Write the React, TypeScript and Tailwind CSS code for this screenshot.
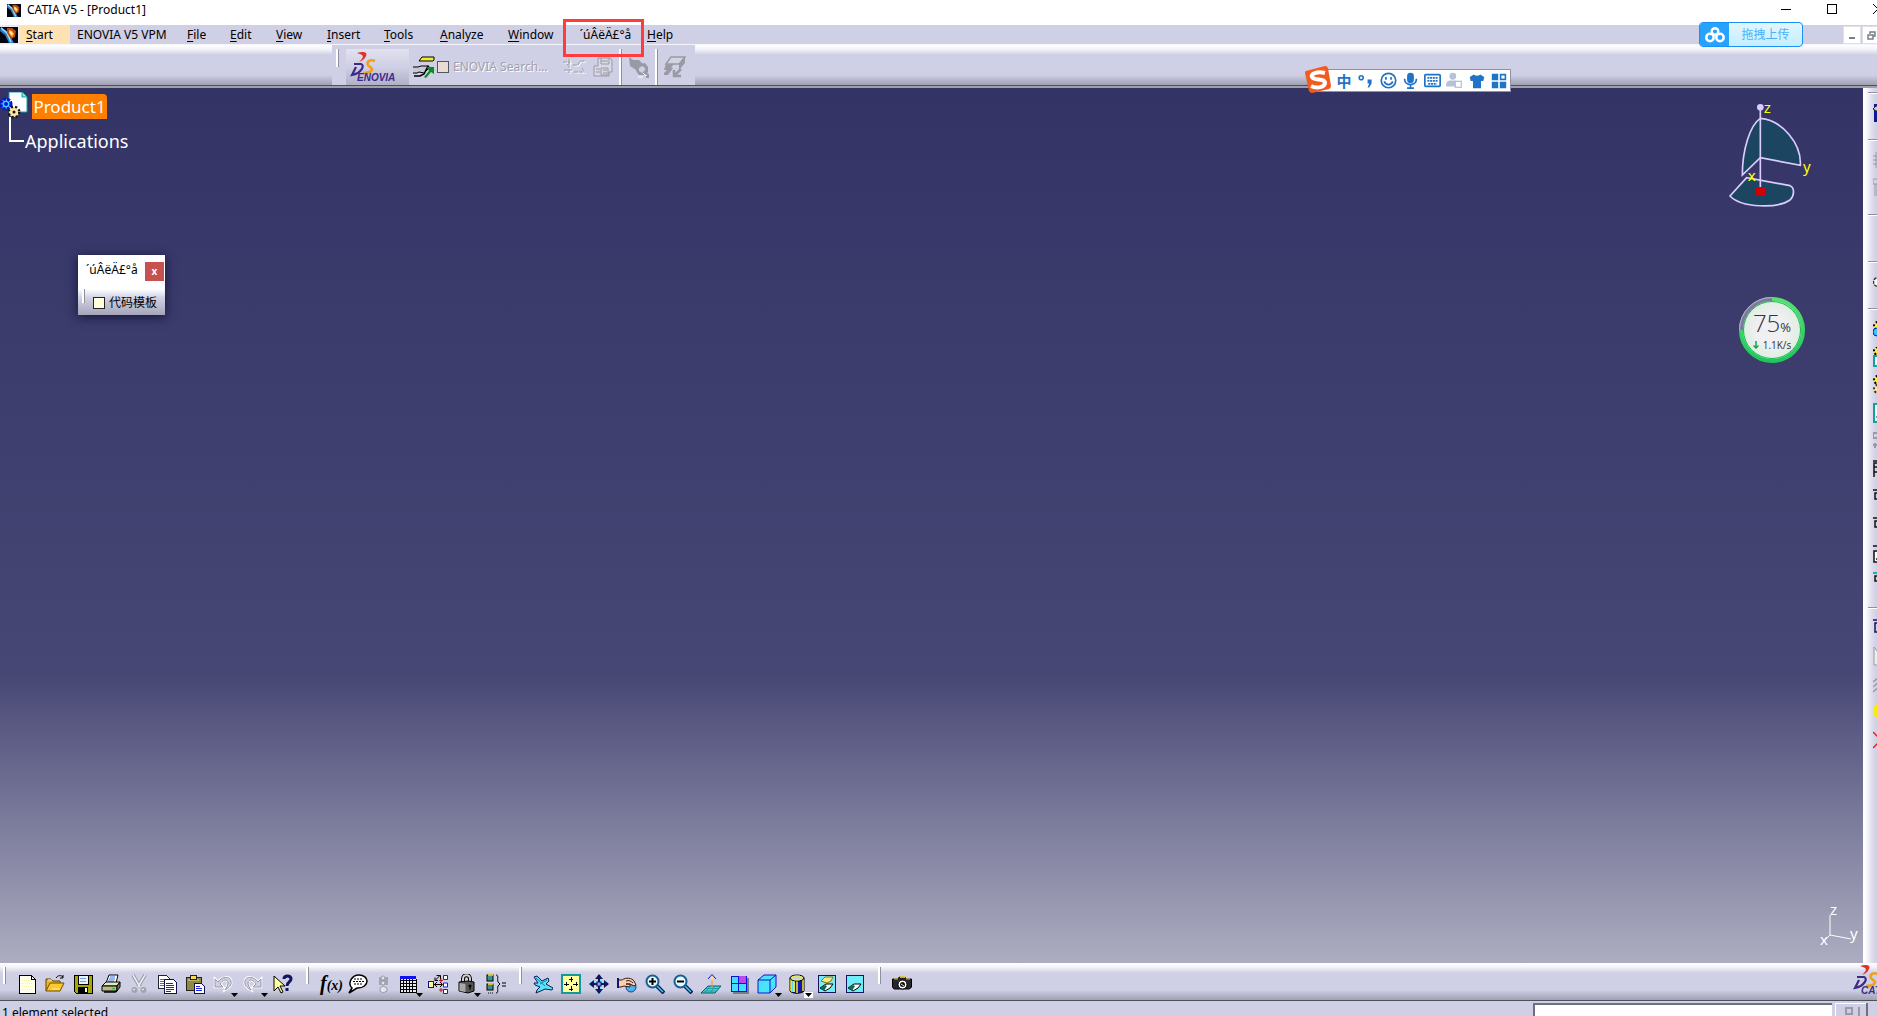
import React from 'react';

const toolbarBg =
  'bg-[linear-gradient(to_bottom,#ffffff_0px,#f4f4fa_4px,#cfcfe5_10px,#cfcfe5_calc(100%-10px),#a0a0b4_100%)]';

const Svg = ({ children, size = 20 }: { children: React.ReactNode; size?: number }) => (
  <svg width={size} height={size} viewBox="0 0 20 20" fill="none" className="shrink-0" aria-hidden="true">
    {children}
  </svg>
);

const Grip = ({ className = '' }: { className?: string }) => (
  <div className={`w-[3px] shrink-0 border-l-2 border-r border-l-white border-r-[#8f8fa0] ${className}`} />
);

const Mark = () => (
  <>
    <path d="M7 2 C13 0 18 1 16 5 C15 8 12 10 9 11 C12 8 14 6 12 4 C11 3 9 3 7 2Z" fill="#e2302c" />
    <path d="M4 13 H11 C15 14 12 22 2 24 L6 16" stroke="#3d2a86" strokeWidth="2.2" />
    <path d="M25 10 C20 8 16 11 18 14 C20 17 24 17 21 20 C19 22 16 22 13 22" stroke="#f0a01e" strokeWidth="2.6" />
  </>
);

const CatiaIcon = ({ w, h }: { w: number; h: number }) => (
  <svg width={w} height={h} viewBox="0 0 18 16" preserveAspectRatio="none" className="shrink-0" aria-hidden="true">
    <rect width="18" height="16" fill="#050510" />
    <path d="M1 0L8 5l6 11H9L5 8 0 4z" fill="#2f7fc8" />
    <path d="M1 1l6 5 4 9" stroke="#a6dcf5" strokeWidth="1.5" fill="none" />
    <path d="M7 1h5l4 3-1 6-4 2-4-6z" fill="#b84a10" />
    <path d="M9 3l3 1 2 3-2 3-3-4z" fill="#ffc24a" />
    <path d="M10 5l2 2" stroke="#fff3c8" strokeWidth="1.500" />
  </svg>
);

const gray = '#9a9aa6';

const icons: Record<string, React.ReactNode> = {
  new: (
    <g shapeRendering="crispEdges">
      <path d="M2 1h12l4 4v14H2z" fill="#fffff0" stroke="#000" />
      <path d="M14 1v4h4" stroke="#000" />
      <path d="M4 9h11M5 12h11M4 15h11M5 6h7" stroke="#f7f3a0" strokeDasharray="1 1" />
    </g>
  ),
  open: (
    <>
      <path d="M1 17V5h5l2 2h7v3" fill="#e8b820" stroke="#5a4300" />
      <path d="M1 17L5 9h14l-4 8z" fill="#ffc72e" stroke="#6b4d00" />
      <path d="M3 6h4M7 15h8" stroke="#fff3a8" />
      <path d="M11 4c2-3 5-3 7-1m0-2v3h-3" stroke="#000" />
    </>
  ),
  save: (
    <g shapeRendering="crispEdges">
      <path d="M1 1h18v18H3l-2-2z" fill="#a8a800" stroke="#000" />
      <rect x="5" y="1" width="10" height="9" fill="#e8f2ff" stroke="#000" />
      <path d="M7 4h6M7 7h6" stroke="#6f9fe0" />
      <rect x="5" y="13" width="10" height="6" fill="#000" />
      <rect x="12" y="14" width="2" height="4" fill="#fff" />
    </g>
  ),
  print: (
    <>
      <path d="M5 9L8 1h9l-2 8z" fill="#fff" stroke="#000" />
      <path d="M9 3h5M8 5h6M7 7h6" stroke="#3b6fe0" />
      <path d="M1 12l4-4h14l-3 4z" fill="#e6e6c8" stroke="#000" />
      <path d="M1 12h15v5H1z" fill="#b9b98a" stroke="#000" />
      <path d="M16 12l3-4v5l-3 4z" fill="#7d7d55" stroke="#000" />
      <path d="M3 18h11l2-1" stroke="#000" strokeWidth="1.5" />
      <path d="M11 14.500h3" stroke="#39c13d" strokeWidth="1.5" />
    </>
  ),
  cut: (
    <>
      <path d="M4 1l7 12M16 1L9 13" stroke={gray} strokeWidth="3.500" />
      <path d="M4 1l7 12M16 1L9 13" stroke="#ececf6" strokeWidth="1.500" />
      <circle cx="5.500" cy="16" r="3" fill="#a4a4ae" />
      <circle cx="14.500" cy="16" r="3" fill="#a4a4ae" />
      <path d="M4 16l2-1M13 16l2-1" stroke="#fff" />
    </>
  ),
  copy: (
    <g shapeRendering="crispEdges">
      <path d="M1 1h8l3 3v10H1z" fill="#fff" stroke="#223" />
      <path d="M3 5h4M3 7h4M3 9h4M3 11h4" stroke="#2d7be0" />
      <path d="M7 5h9l3 3v11H7z" fill="#fff" stroke="#101050" />
      <path d="M9 9h7M9 11h8M9 13h8M9 15h8M9 17h5" stroke="#1a22e0" />
    </g>
  ),
  paste: (
    <g shapeRendering="crispEdges">
      <path d="M1 3h15v13H1z" fill="#8f8a45" stroke="#222" />
      <path d="M3 5h11v2H3z" fill="#b8b46a" />
      <path d="M5 1h6v4H5z" fill="#ffd84a" stroke="#222" />
      <path d="M9 9h7l3 3v7H9z" fill="#fff" stroke="#101050" />
      <path d="M11 12h4M11 14h6M11 16h6" stroke="#1a22e0" />
    </g>
  ),
  undo: (
    <>
      <path d="M2 5v8h8l-3-3c3-5 8-5 8-1 0 3-2 5-3 7 4-2 7-5 6-9C17 2 9 2 5 8z" stroke="#fff" strokeWidth="2.5" />
      <path d="M2 5v8h8l-3-3c3-5 8-5 8-1 0 3-2 5-3 7 4-2 7-5 6-9C17 2 9 2 5 8z" stroke={gray} fill="#cfcfe5" />
    </>
  ),
  redo: (
    <>
      <path d="M18 5v8h-8l3-3C10 5 5 5 5 9c0 3 2 5 3 7-4-2-7-5-6-9C3 2 11 2 15 8z" stroke="#fff" strokeWidth="2.5" />
      <path d="M18 5v8h-8l3-3C10 5 5 5 5 9c0 3 2 5 3 7-4-2-7-5-6-9C3 2 11 2 15 8z" stroke={gray} fill="#cfcfe5" />
    </>
  ),
  help: (
    <>
      <path d="M1 2v15l4-4 3 6 2-1-3-6h5z" fill="#ffff9a" stroke="#000" />
      <path d="M11 5c0-4 7-4 7 0 0 3-4 3-4 7" stroke="#15155e" strokeWidth="3" />
      <rect x="12.500" y="14" width="3" height="3" fill="#15155e" />
    </>
  ),
  bubble: (
    <>
      <path d="M11 1c5 0 8 3 8 6 0 4-4 7-9 7H9l-8 5 3-5C-1 9 4 1 11 1z" fill="#fff" stroke="#000" strokeWidth="1.5" />
      <path d="M6 5h9M5 7.500h11M6 10h8" stroke="#000" strokeDasharray="2 1" />
    </>
  ),
  traffic: (
    <>
      <path d="M7 3h9v8H7z" fill="#a4a4ae" />
      <circle cx="11" cy="4" r="2" fill="#e4e4ee" stroke={gray} />
      <circle cx="11" cy="9" r="2" fill="#e4e4ee" stroke={gray} />
      <path d="M8 14l3-2 4 2v3l-4 2-3-2z" fill="#e4e4ee" stroke={gray} />
    </>
  ),
  table: (
    <g shapeRendering="crispEdges">
      <rect x="2" y="5" width="16" height="13" fill="#e9e9f6" />
      <rect x="2" y="2" width="16" height="3" fill="#1010f0" />
      <path d="M2 5v13M5 5v13M8 5v13M11 5v13M14 5v13M18 5v13M2 6h16M2 9h16M2 12h16M2 15h16M2 18h17" stroke="#000" />
    </g>
  ),
  relations: (
    <>
      <rect x="0.500" y="7.500" width="5" height="6" fill="#fff59a" stroke="#15155e" />
      <path d="M6 10.500h8M7 6.500l5-5M8.500 1.500h4v4M7 3.500v3h3M9 8l-2.500 2.500L9 13M12 8l2.500 2.500L12 13" stroke="#000" />
      <path d="M11 6.500h4M13 4.500v4M11 16h4M13 14v4" stroke="#c01020" />
      <path d="M15.500 1.500h4v4h-4zM15.500 9h4v4h-4zM15.500 15.500h4v4h-4z" fill="#fff" stroke="#1515f0" />
    </>
  ),
  lock: (
    <>
      <path d="M7 9V5c0-5 7-5 7 0v3" stroke="#000" strokeWidth="4" />
      <path d="M7 9V5c0-5 7-5 7 0v3" stroke="#d0d0d0" strokeWidth="2" />
      <path d="M3 8l9-1 6 1v9l-6 2-9-2z" fill="#555" stroke="#000" />
      <path d="M3.500 9l6 1v8l-6-1z" fill="#a8a8a8" />
      <circle cx="14" cy="12" r="1.500" fill="#000" />
      <path d="M14 12v4" stroke="#000" />
    </>
  ),
  law: (
    <>
      <rect x="1" y="1" width="6" height="6" fill="#3f8f8c" stroke="#000" />
      <rect x="1" y="10" width="6" height="6" fill="#3f8f8c" stroke="#000" />
      <path d="M2 1h5M2 10h5" stroke="#ffe23d" strokeWidth="1.500" />
      <path d="M2 19h5" stroke="#000" strokeDasharray="1 1" />
      <path d="M10 1c3 0 1 4 2 7l2 2-2 2c-1 3 1 7-2 7" stroke="#000" />
      <path d="M16 9h4M16 12h4" stroke="#000" />
    </>
  ),
  fly: (
    <>
      <path d="M1 3l3-1 5 5 6-3 1 3-3 3 7 4-1 2-7-1-2 1-7 3 1-3 3-3-5-2-1-2h4z" fill="#58e4f4" stroke="#0c1c5a" />
      <path d="M3 4l9 8M7 10l7-4" stroke="#1f7fb8" />
    </>
  ),
  fit: (
    <g shapeRendering="crispEdges">
      <rect x="1" y="1" width="18" height="18" fill="#ffff9c" stroke="#109a9a" strokeWidth="2" />
      <path d="M10 3v5M10 12v5M3 10h5M12 10h5M8 5h4M8 15h4M5 8v4M15 8v4" stroke="#000" />
    </g>
  ),
  pan: (
    <>
      <path d="M10 1v18M1 10h18" stroke="#6ee4f8" strokeWidth="4" />
      <path d="M10 1v18M1 10h18" stroke="#15155e" strokeWidth="2" />
      <path d="M10 0l4 5H6zM10 20l4-5H6zM0 10l5-4v8zM20 10l-5-4v8z" fill="#15155e" />
      <rect x="8" y="8" width="4" height="4" fill="#9aa0e0" stroke="#15155e" />
    </>
  ),
  rotate: (
    <>
      <circle cx="14" cy="13" r="5" fill="#49b4f0" stroke="#15408a" />
      <path d="M1 6h4c4-3 10-2 12 1l2 4-2 1-4-2H9h4v3l-6-1-3 1H1z" fill="#f9d0b4" stroke="#3a1a10" />
      <path d="M9 7c3-1 5 0 7 2" stroke="#3a1a10" />
      <path d="M1 4v10" stroke="#15155e" strokeWidth="2" />
    </>
  ),
  zoomIn: (
    <>
      <path d="M12 12l7 7" stroke="#0c1c5a" strokeWidth="4" />
      <path d="M12 12l6 6" stroke="#38d4ea" strokeWidth="1.500" />
      <circle cx="7.500" cy="7.500" r="6" fill="#e4fbff" stroke="#1d5d90" strokeWidth="2" />
      <path d="M7.500 4v7M4 7.500h7" stroke="#000" strokeWidth="2" />
    </>
  ),
  zoomOut: (
    <>
      <path d="M12 12l7 7" stroke="#0c1c5a" strokeWidth="4" />
      <path d="M12 12l6 6" stroke="#38d4ea" strokeWidth="1.500" />
      <circle cx="7.500" cy="7.500" r="6" fill="#e4fbff" stroke="#1d5d90" strokeWidth="2" />
      <path d="M4 7.500h7" stroke="#000" strokeWidth="2" />
    </>
  ),
  normal: (
    <>
      <path d="M0 19l7-7h13l-6 7z" fill="#4cd0d0" stroke="#0a5a6a" />
      <path d="M3 17h13M5 14.500h13M9 12l-5 7M14 12l-5 7" stroke="#0d8f98" strokeWidth="0.700" />
      <path d="M11 5v9" stroke="#ff8a2a" />
      <path d="M7 5l4-4.500L15 5" stroke="#1515d0" />
      <path d="M11 2l1.500 2.500L11 7 9.500 4.500z" fill="#ffe66a" />
    </>
  ),
  multi: (
    <g shapeRendering="crispEdges">
      <rect x="4" y="4" width="16" height="16" fill="#7b7b8a" />
      <rect x="2" y="2" width="15" height="15" fill="#40e0ff" stroke="#1010e0" />
      <rect x="10" y="2" width="7" height="7" fill="#c048e8" />
      <path d="M9.500 2v15M2 9.500h15" stroke="#1010e0" />
    </g>
  ),
  cube: (
    <>
      <path d="M1 6l6-5h12v12l-6 6H1z" fill="#48e4ff" stroke="#1414c8" />
      <path d="M1 6h12v13M13 6l6-5" stroke="#1414c8" />
    </>
  ),
  shading: (
    <>
      <path d="M3 4v13c2 3 12 3 14 0V4z" fill="#1515b0" stroke="#000" />
      <path d="M4 6h4v12H4z" fill="#5ad8f0" />
      <path d="M10 6v13M4 5v12M16 5v12M7 6v12" stroke="#ffea20" strokeWidth="1.500" />
      <ellipse cx="10" cy="4" rx="7" ry="3" fill="#b9d8e8" stroke="#000" />
      <ellipse cx="10" cy="4" rx="5.500" ry="2" stroke="#ffea20" />
    </>
  ),
  hide: (
    <>
      <rect x="1.500" y="1.500" width="17" height="17" fill="#70ecfa" stroke="#15155e" />
      <path d="M4 7l4-4h8l-2 4-4 2z" fill="#ffe680" stroke="#8a7400" />
      <path d="M3 14l6-4h7l-3 4-5 3z" fill="#fffff0" stroke="#000" />
      <path d="M3 14l5-3 2 1-3 5z" fill="#0f6a5a" />
    </>
  ),
  swap: (
    <>
      <rect x="1.500" y="1.500" width="17" height="17" fill="#70ecfa" stroke="#15155e" />
      <path d="M3 14l6-4h7l-3 4-5 3z" fill="#fffff0" stroke="#000" />
      <path d="M3 14l5-3 2 1-3 5z" fill="#0f6a5a" />
    </>
  ),
  camera: (
    <>
      <path d="M0.500 5h5l2-2h5l2 2h5v8l-2 2H2l-1.500-2z" fill="#26262c" stroke="#000" />
      <path d="M2 5h4M14 5h4" stroke="#e8c850" />
      <path d="M8 3h5" stroke="#ffe23d" strokeWidth="1.500" />
      <circle cx="10.500" cy="10.500" r="4.500" fill="#fff" stroke="#000" />
      <circle cx="10.500" cy="10.500" r="2.500" fill="#111" />
      <path d="M9 10l3 2" stroke="#ddd" />
    </>
  ),
};

type Tool = { id: string; label: string; menu?: boolean; boxed?: boolean };

const groups: Tool[][] = [
  [
    { id: 'new', label: 'New' },
    { id: 'open', label: 'Open' },
    { id: 'save', label: 'Save' },
    { id: 'print', label: 'Quick Print' },
    { id: 'cut', label: 'Cut' },
    { id: 'copy', label: 'Copy' },
    { id: 'paste', label: 'Paste' },
    { id: 'undo', label: 'Undo', menu: true },
    { id: 'redo', label: 'Redo', menu: true },
    { id: 'help', label: "What's This?" },
  ],
  [
    { id: 'fx', label: 'Formula' },
    { id: 'bubble', label: 'Comment and URLs' },
    { id: 'traffic', label: 'Check Analysis' },
    { id: 'table', label: 'Design Table', menu: true },
    { id: 'relations', label: 'Relations' },
    { id: 'lock', label: 'Lock', menu: true },
    { id: 'law', label: 'Equivalent Dimensions' },
  ],
  [
    { id: 'fly', label: 'Fly Mode' },
    { id: 'fit', label: 'Fit All In' },
    { id: 'pan', label: 'Pan' },
    { id: 'rotate', label: 'Rotate' },
    { id: 'zoomIn', label: 'Zoom In' },
    { id: 'zoomOut', label: 'Zoom Out' },
    { id: 'normal', label: 'Normal View' },
    { id: 'multi', label: 'Multi View' },
    { id: 'cube', label: 'Isometric View', menu: true },
    { id: 'shading', label: 'Shading', menu: true, boxed: true },
    { id: 'hide', label: 'Hide/Show' },
    { id: 'swap', label: 'Swap Visible Space' },
  ],
  [{ id: 'camera', label: 'Capture' }],
];

const ToolButton = ({ tool }: { tool: Tool }) => (
  <button
    type="button"
    aria-label={tool.label}
    className={`relative flex h-full items-center ${
      tool.menu ? 'w-[30px] pl-1' : tool.id === 'traffic' ? 'w-[22px]' : 'w-7 pl-1'
    }`}
  >
    {tool.id === 'fx' ? (
      <span className="font-['Liberation_Serif',serif] text-[20px] font-bold italic leading-5 whitespace-nowrap">
        f<span className="text-[14px]">(x)</span>
      </span>
    ) : (
      <Svg>{icons[tool.id]}</Svg>
    )}
    {tool.menu && (
      <span className={`absolute right-0 bottom-0 flex h-[6px] w-[9px] items-center justify-center ${tool.boxed ? 'bg-white' : ''}`}>
        <svg width="7" height="4" viewBox="0 0 7 4" aria-hidden="true">
          <path d="M0 0h7L3.500 4z" fill="#000" />
        </svg>
      </span>
    )}
  </button>
);

const menus = [
  { label: 'Start', w: 'w-[51px] bg-[#ffe2b4]', key: true },
  { label: 'ENOVIA V5 VPM', w: 'w-[110px]' },
  { label: 'File', w: 'w-[43px]', key: true },
  { label: 'Edit', w: 'w-[46px]', key: true },
  { label: 'View', w: 'w-[51px]', key: true },
  { label: 'Insert', w: 'w-[57px]', key: true },
  { label: 'Tools', w: 'w-[56px]', key: true },
  { label: 'Analyze', w: 'w-[68px]', key: true },
  { label: 'Window', w: 'w-[62px]', key: true },
];

const MenuText = ({ label }: { label: string }) => (
  <>
    <span className="underline underline-offset-2">{label[0]}</span>
    {label.slice(1)}
  </>
);

const TitleBar = () => (
  <header className="flex h-[25px] shrink-0 items-start bg-white">
    <div className="flex h-5 items-center gap-[6px] pl-[7px]">
      <CatiaIcon w={14} h={13} />
      <h1>CATIA V5 - [Product1]</h1>
    </div>
    <div className="ml-auto flex h-[18px]">
      <button type="button" aria-label="Minimize" className="flex w-[46px] items-center justify-center">
        <span className="h-px w-[10px] bg-black" />
      </button>
      <button type="button" aria-label="Maximize" className="flex w-[45px] items-center justify-center">
        <span className="size-[10px] border border-black" />
      </button>
      <button type="button" aria-label="Close" className="flex w-[23px] items-center overflow-hidden pl-[19px]">
        <svg width="10" height="10" viewBox="0 0 10 10" className="shrink-0" aria-hidden="true">
          <path d="M0 0L10 10M10 0L0 10" stroke="#000" />
        </svg>
      </button>
    </div>
  </header>
);

const MenuBar = () => (
  <nav className="flex h-5 shrink-0 border-b border-[#f4f4fa] bg-[#cfcfe5]">
    <div className="w-[19px] bg-[#e8e8f2] pt-[2px]">
      <CatiaIcon w={18} h={16} />
    </div>
    {menus.map((m) => (
      <button key={m.label} type="button" className={`pl-[7px] text-left whitespace-nowrap ${m.w}`}>
        {m.key ? <MenuText label={m.label} /> : m.label}
      </button>
    ))}
    <button type="button" className="relative w-[81px] pl-1 text-center">
      ´úÂëÄ£°å
      <span className="absolute inset-x-0 -top-[6px] z-10 h-[38px] border-3 border-[#ff3b3b]" />
    </button>
    <button type="button" className="pl-[3px]">
      <MenuText label="Help" />
    </button>
    <div className="ml-auto flex gap-px pt-px">
      <button type="button" aria-label="Minimize document" className="flex h-[18px] w-[18px] items-end justify-center border border-[#e0e0e8] bg-white pb-1">
        <span className="h-[2px] w-[6px] bg-[#75808c]" />
      </button>
      <button type="button" aria-label="Restore document" className="flex h-[18px] w-[15px] items-center overflow-hidden border-y border-l border-[#e0e0e8] bg-white pl-1">
        <svg width="9" height="9" viewBox="0 0 9 9" fill="none" className="shrink-0" aria-hidden="true">
          <path d="M3 3V1h5v4H6M1 4h5v4H1z" stroke="#75808c" strokeWidth="1.500" />
        </svg>
      </button>
    </div>
  </nav>
);

const TopToolbar = () => (
  <div className="flex h-[43px] shrink-0 flex-col">
    <div className={`flex min-h-0 flex-1 border-b border-[#50505a] ${toolbarBg}`}>
      <div className="ml-[332px] flex w-[363px] bg-[#cfcfe5] pt-1 pl-1">
        <Grip className="h-[18px]" />
        <button type="button" aria-label="ENOVIA" className="ml-[7px] w-[63px] bg-linear-to-b from-[#e2e2ef] via-[#cfcfe5] to-[#b0b0c6]">
          <svg width="63" height="34" viewBox="0 0 63 34" fill="none" aria-hidden="true">
            <g transform="translate(4 1)">
              <Mark />
            </g>
            <text x="11" y="31" fill="#3d2a86" className="font-['Liberation_Sans',sans-serif] text-[10px] font-bold italic">
              ENOVIA
            </text>
          </svg>
        </button>
        <button type="button" aria-label="Connect" className="flex w-7 items-center justify-center">
          <svg width="23" height="23" viewBox="0 0 23 23" fill="none" aria-hidden="true">
            <path d="M7 5l3-4h12v3l-1 1z" fill="#f4ea30" stroke="#000" />
            <path d="M1 11h5l3-1h8l-1 3-4 4-5-1-2 1H1" fill="#c9c9d4" stroke="#000" />
            <path d="M16 10l-4 8-4 2H2" stroke="#000" strokeWidth="1.500" />
            <path d="M12 21l5-6-2-4h7v7l-3-2-5 6z" fill="#0a8a28" />
          </svg>
        </button>
        <label className="flex w-[126px] items-center gap-1 whitespace-nowrap text-[#a0a0ac] [text-shadow:1px_1px_0_#fff]">
          <input type="checkbox" disabled className="size-3 appearance-none border border-[#55555f] bg-[#e8dcd4]" />
          ENOVIA Search...
        </label>
        <button type="button" aria-label="Structure" className="flex w-6 items-center justify-center">
          <svg width="24" height="20" viewBox="0 0 24 20" fill="none" aria-hidden="true">
            <g stroke="#fff">
              <path d="M1 6h7M2 14h8M7 3v14M5 9l4-3M11 9h5l2-4h5M12 16h11M20 12l2 3" />
            </g>
            <path d="M0 5h7M1 13h8M6 2v14M4 8l4-3M10 8h5l2-4h5M11 15h11M19 11l2 3" stroke={gray} strokeDasharray="4 1" />
          </svg>
        </button>
        <button type="button" aria-label="Save in ENOVIA" className="flex w-8 items-center justify-center">
          <Svg>
            <path d="M5 1h12l2 2v12h-3v4H1V9h4z" fill="#d8d8e6" stroke={gray} />
            <path d="M8 1v6h8V1M8 4h7M3 12h4M3 15h4M8 11h7v7H8zM10 13h4M10 16h4" stroke={gray} />
          </Svg>
        </button>
        <Grip className="h-9" />
        <button type="button" aria-label="Search" className="flex w-[33px] items-center justify-center">
          <svg width="22" height="22" viewBox="0 0 22 22" fill="none" aria-hidden="true">
            <path d="M1 1l4 3h6l3 3-1 6-5 1-6-4z" fill={gray} />
            <path d="M11 8l6-1 3 4v5l-3 3h-6l-3-4 1-3z" fill={gray} />
            <path d="M11 12l3-2 3 2v3l-3 2-3-2z" fill="#cfcfe5" />
            <path d="M16 15l4 4v2h-5" stroke={gray} strokeWidth="2" />
            <path d="M10 21h8M15 17l3 3" stroke="#fff" />
          </svg>
        </button>
        <Grip className="h-9" />
        <button type="button" aria-label="Send" className="flex w-8 items-center justify-center">
          <svg width="23" height="23" viewBox="0 0 23 23" fill="none" aria-hidden="true">
            <path d="M8 1h14l-6 7H3z" fill="#d5d5e2" stroke={gray} strokeWidth="1.500" />
            <path d="M22 1v6l-6 7V8zM3 8h8l-5 6H1zM1 17l6-6 3 1-5 7H1z" fill={gray} />
            <path d="M18 13l-6 6M11 14v6h7" stroke={gray} strokeWidth="2.500" />
          </svg>
        </button>
      </div>
    </div>
    <div className="h-[2px] bg-[#a0a0a4]" />
  </div>
);

const Tree = () => (
  <div className="relative flex flex-col text-white">
    <div className="flex h-[37px] items-center pl-8 text-[17px]">
      <button type="button" className="h-[25px] w-[75px] rounded-tr-sm bg-[#ff8000] text-center leading-6">Product1</button>
    </div>
    <p className="pl-[25px] text-[18px] leading-8">Applications</p>
    <svg width="30" height="56" viewBox="0 0 30 56" fill="none" className="absolute top-1 left-0" aria-hidden="true">
      <path d="M10 25V49H24" stroke="#fff" strokeWidth="2" />
      <path d="M9 0h13l5 5v15H9z" fill="#fff" stroke="#12a0a0" />
      <path d="M22 0v5h5" fill="#7fe9e9" stroke="#12a0a0" />
      <circle cx="6" cy="12" r="5" fill="#3fd4ff" stroke="#0a14d8" strokeWidth="3" strokeDasharray="3 1" />
      <circle cx="6" cy="12" r="2" fill="#0a14d8" />
      <circle cx="14" cy="20" r="5" fill="#ffe89a" stroke="#151520" strokeWidth="3" strokeDasharray="2 2" />
      <circle cx="14" cy="20" r="4" fill="#ffe89a" />
      <circle cx="14" cy="20" r="1.500" fill="#151520" />
    </svg>
  </div>
);

const TemplateWindow = () => (
  <section className="absolute top-[167px] left-[78px] w-[87px] shadow-[0_2px_10px_#15153a]">
    <div className="flex h-[34px] items-start bg-white">
      <h2 className="flex-1 pt-[7px] pl-2 leading-4">´úÂëÄ£°å</h2>
      <button type="button" aria-label="Close" className="mt-[7px] mr-px flex h-[19px] w-[19px] items-center justify-center bg-[#c75050] pb-[2px] text-[10px] leading-4 font-bold text-white">
        x
      </button>
    </div>
    <div className="flex h-[26px] bg-linear-to-b from-white via-[#cfcfe5] via-35% to-[#a5a5ba]">
      <Grip className="ml-1 h-[14px]" />
      <label className="ml-2 flex items-center gap-1 pt-px whitespace-nowrap">
        <input type="checkbox" className="size-3 appearance-none border border-[#222] bg-[#ffffdc]" />
        代码模板
      </label>
    </div>
  </section>
);

const Compass = () => (
  <svg width="90" height="110" viewBox="0 0 270 330" fill="none" className="absolute top-3 right-12" aria-label="Compass">
    <g stroke="#dccbff" strokeWidth="5">
      <path d="M52 225C52 150 75 75 106 55C170 60 230 130 226 196L106 173Z" fill="#1b4560" />
      <path d="M65 233L15 288C50 325 160 325 195 300C210 285 208 262 195 257Z" fill="#1b4560" />
      <path d="M106 22V272" />
    </g>
    <circle cx="106" cy="22" r="10" fill="#dccbff" />
    <rect x="92" y="261" width="28" height="26" fill="#d00000" />
    <g fill="#ffff00" className="text-[45px]">
      <text x="116" y="40">z</text>
      <text x="234" y="216">y</text>
      <text x="68" y="243">x</text>
    </g>
  </svg>
);

const SpeedBall = () => (
  <div className="absolute top-[209px] right-[58px] size-[66px] font-['Open_Sans','Noto_Sans',sans-serif] text-[#333]">
    <svg width="66" height="66" viewBox="0 0 66 66" fill="none" className="absolute inset-0" aria-hidden="true">
      <defs>
        <radialGradient id="ball">
          <stop offset="0.5" stopColor="#f0eff2" />
          <stop offset="1" stopColor="#dbeedd" />
        </radialGradient>
        <linearGradient id="ring" x1="0" y1="0" x2="0" y2="1">
          <stop offset="0" stopColor="#58e070" />
          <stop offset="1" stopColor="#1cc85a" />
        </linearGradient>
      </defs>
      <circle cx="33" cy="33" r="31" fill="url(#ball)" stroke="url(#ring)" strokeWidth="4" />
      <circle cx="33" cy="33" r="28.500" stroke="#18b853" />
      <path d="M2 33A31 31 0 0 1 33 2" stroke="#7c7a9c" strokeWidth="4" />
      <path d="M0.500 33A32.500 32.500 0 0 1 33 0.500" stroke="#b5b4c8" />
    </svg>
    <div className="relative flex flex-col items-center pt-[14px]">
      <p className="text-[24px] leading-6 font-light">
        75<span className="text-[13px] font-normal">%</span>
      </p>
      <p className="flex items-center gap-1 text-[10px] leading-3">
        <svg width="6" height="8" viewBox="0 0 6 8" fill="none" aria-hidden="true">
          <path d="M3 0v7M0.500 4.500L3 7l2.500-2.500" stroke="#19a54a" strokeWidth="1.500" />
        </svg>
        1.1K/s
      </p>
    </div>
  </div>
);

const Triad = () => (
  <svg width="46" height="48" viewBox="0 0 46 48" className="absolute right-px bottom-[14px]" aria-label="Axis system">
    <path d="M14 14V34L35 38M14 34L8 40" stroke="#fff" fill="none" />
    <g fill="#fff" className="text-[15px]">
      <text x="14" y="14">z</text>
      <text x="34" y="38">y</text>
      <text x="4" y="44">x</text>
    </g>
  </svg>
);

const Viewport = () => (
  <main className="relative min-w-0 flex-1 bg-[linear-gradient(to_bottom,#333366_0%,#474775_67%,#adadc1_100%)]">
    <Tree />
    <TemplateWindow />
    <Compass />
    <SpeedBall />
    <Triad />
  </main>
);

// side palette: only the left edge of each icon is on screen
const sideGroups: { name: string; tools: React.ReactNode[] }[] = [
  { name: 'Select', tools: [<><path d="M1 1h19v18H1z" fill="#0c1c90" /><path d="M0 6l3-3h6v5H3z" fill="#ccc" stroke="#222" /></>] },
  {
    name: 'Structure',
    tools: [
      <path d="M3 2v16M0 6h10M0 10h10M0 14h10" stroke={gray} />,
      <path d="M0 1h14v5H0zM2 6v12M4 6v12" stroke={gray} />,
    ],
  },
  { name: 'Product', tools: [<></>] },
  { name: 'Tools', tools: [<circle cx="5" cy="10" r="4.500" fill="#fff" stroke="#333" strokeWidth="1.500" strokeDasharray="3 1" />] },
  {
    name: 'Components',
    tools: [
      <><circle cx="5" cy="7" r="4" fill="#fff04a" stroke="#000" strokeDasharray="2 2" strokeWidth="2" /><circle cx="4" cy="13" r="4" fill="#36c8f0" stroke="#0a14d8" /></>,
      <><circle cx="5" cy="4" r="4" fill="#fff04a" stroke="#000" strokeDasharray="2 2" strokeWidth="2" /><rect x="1" y="9" width="14" height="10" fill="#fff" stroke="#12a0a0" strokeWidth="2" /></>,
      <><circle cx="5" cy="5" r="4" fill="#fff04a" stroke="#000" strokeDasharray="2 2" strokeWidth="2" /><circle cx="5" cy="14" r="4" fill="#ffe89a" stroke="#333" strokeDasharray="2 2" strokeWidth="2" /></>,
      <><rect x="1" y="1" width="18" height="18" fill="#fff" stroke="#12a0a0" strokeWidth="2" /><path d="M3 14h6" stroke="#222" /></>,
      <path d="M0 2h10v5H0zM2 12v5M0 14h8" stroke={gray} strokeWidth="2" />,
      <path d="M0 2h12v2H1v14M1 8h10M1 13h10" stroke="#111" strokeWidth="1.500" />,
      <path d="M0 3h12v3H2v6h10" stroke="#111" strokeWidth="1.500" />,
      <path d="M0 3h12v3H2v6h10" stroke="#111" strokeWidth="1.500" />,
      <path d="M1 8h12v11H1zM0 3h5M3 16h5" fill="#fff" stroke="#111" strokeWidth="1.500" />,
      <><path d="M0 2h12v3H2v5h10" stroke="#111" strokeWidth="1.500" /><path d="M0 2h12" stroke="#12b0c0" strokeWidth="2" /></>,
    ],
  },
  {
    name: 'Constraints',
    tools: [
      <path d="M0 2h12v3H2v9h10" stroke="#15155e" strokeWidth="1.500" />,
      <path d="M1 1v18h12M1 1l6 8" stroke={gray} fill="#eee" />,
      <path d="M0 8l6-5M0 13l8-7M0 18l8-7" stroke={gray} strokeWidth="1.500" />,
      <circle cx="8" cy="9" r="6" stroke="#f6f000" strokeWidth="4" />,
      <path d="M0 2l8 8M0 18l8-8" stroke="#f01818" strokeWidth="1.500" />,
    ],
  },
];

const SidePalette = () => (
  <aside className="w-[14px] shrink-0 overflow-hidden border-l-2 border-white bg-linear-to-r from-white via-[#dcdcec] via-60% to-[#cfcfe5] pt-1">
    {sideGroups.map((g) => (
      <div key={g.name} role="group" aria-label={g.name} className="pb-3 pl-[3px]">
        <div className="mb-[5px] h-[2px] border-t border-t-[#8f8fa0] bg-white" />
        {g.tools.map((tool, i) => (
          <button key={i} type="button" aria-label={`${g.name} ${i + 1}`} className="flex h-7 w-full items-center overflow-hidden pl-[5px]">
            <Svg>{tool}</Svg>
          </button>
        ))}
      </div>
    ))}
  </aside>
);

const BottomToolbar = () => (
  <div className={`flex h-[38px] shrink-0 overflow-hidden border-b border-[#50505a] pl-[3px] ${toolbarBg}`}>
    {groups.map((group, i) => (
      <div key={i} className="flex">
        <Grip className="mt-1 h-[17px]" />
        <div className="mt-[7px] mr-[9px] ml-[7px] flex h-7">
          {group.map((tool) => (
            <ToolButton key={tool.id} tool={tool} />
          ))}
        </div>
      </div>
    ))}
    <div className="ml-auto w-6 overflow-hidden pt-px">
      <svg width="44" height="34" viewBox="0 0 44 34" fill="none" aria-label="CATIA">
        <Mark />
        <text x="8" y="30" fill="#3d2a86" className="font-['Liberation_Sans',sans-serif] text-[10px] font-bold italic">
          CATIA
        </text>
      </svg>
    </div>
  </div>
);

const StatusBar = () => (
  <footer className="flex h-[15px] shrink-0 overflow-hidden bg-[#cfcfe5] pt-px">
    <p className="pl-[2px] leading-[22px]">1 element selected</p>
    <input
      type="text"
      aria-label="Power input"
      className="mt-px ml-auto h-[22px] w-[299px] border-t-2 border-l-2 border-[#70707a] bg-white px-1 outline-none"
    />
    <button type="button" aria-label="Command window" className="mt-px ml-[3px] flex h-[22px] w-[31px] border-t border-l border-white pt-[3px] pl-[9px]">
      <svg width="16" height="12" viewBox="0 0 16 12" fill="none" aria-hidden="true">
        <path d="M1 1h6v6H1zM14 0v12M9 10h5" stroke={gray} strokeWidth="2" />
      </svg>
    </button>
    <div className="mt-px h-[22px] w-[11px] border-l-2 border-[#70707a]" />
  </footer>
);

const CloudUpload = () => (
  <button
    type="button"
    className="absolute top-[22px] right-[74px] z-20 flex h-[25px] w-[104px] overflow-hidden rounded border border-[#1890f8] bg-linear-to-b from-[#e2f6ff] to-[#c4eeff] text-[#4ab0fa]"
  >
    <span className="flex h-full w-[29px] items-center justify-center bg-[#26a2ff]">
      <svg width="20" height="16" viewBox="0 0 20 16" fill="none" stroke="#fff" strokeWidth="2.5" aria-hidden="true">
        <circle cx="10" cy="4.500" r="3.300" />
        <circle cx="5" cy="10.500" r="3.700" />
        <circle cx="15" cy="10.500" r="3.700" />
      </svg>
    </span>
    <span className="flex-1 text-center leading-[23px]">拖拽上传</span>
  </button>
);

const ImeBar = () => (
  <div className="absolute top-[69px] right-[366px] z-20 flex h-[23px] w-[196px] items-center border border-[#9090a8] bg-white pl-[17px] text-[#1f74c8]">
    <svg width="28" height="28" viewBox="0 0 28 28" fill="none" className="absolute -top-[4px] -left-[12px]" aria-label="Sogou">
      <path d="M2 5L21 0Q23 0 24 2L27 20Q27 22 25 23L8 27Q6 27 5 25L1 7Q1 5 2 5Z" fill="#f25a1e" />
      <path d="M21 7C13 5 6 8 8 11C10 15 21 12 21 17C21 21 13 23 7 20" stroke="#fff" strokeWidth="4" />
    </svg>
    <button type="button" className="w-[22px] text-[15px] leading-5 font-bold">中</button>
    <button type="button" aria-label="Punctuation" className="flex w-[22px] justify-center">
      <Svg size={16}>
        <circle cx="4" cy="6" r="2.500" stroke="currentColor" strokeWidth="2" />
        <path d="M12 8h5v5l-3 5h-2l2-5h-2z" fill="currentColor" />
      </Svg>
    </button>
    <button type="button" aria-label="Emoji" className="flex w-[22px] justify-center">
      <Svg size={17}>
        <circle cx="10" cy="10" r="8.500" stroke="currentColor" strokeWidth="2" />
        <path d="M7 6v3M13 6v3" stroke="currentColor" strokeWidth="2" />
        <path d="M5 11c2 5 8 5 10 0" stroke="currentColor" strokeWidth="2" />
      </Svg>
    </button>
    <button type="button" aria-label="Voice" className="flex w-[22px] justify-center">
      <Svg size={17}>
        <rect x="6" y="1" width="8" height="12" rx="4" fill="currentColor" />
        <path d="M3 8c0 9 14 9 14 0M10 15v4M6 19h8" stroke="currentColor" strokeWidth="2" />
      </Svg>
    </button>
    <button type="button" aria-label="Keyboard" className="flex w-[22px] justify-center">
      <Svg size={17}>
        <rect x="1" y="3" width="18" height="14" rx="1" stroke="currentColor" strokeWidth="2" />
        <path d="M4 7h12M4 10.500h12M5 14h10" stroke="currentColor" strokeWidth="2" strokeDasharray="2.400 0.800" />
      </Svg>
    </button>
    <button type="button" aria-label="Account" className="flex w-[23px] justify-center text-[#b8c2d6]">
      <Svg size={17}>
        <circle cx="8" cy="5" r="4" fill="currentColor" />
        <path d="M0 17c0-8 4-7 8-7s6 0 6 2v5z" fill="currentColor" />
        <rect x="11" y="11" width="7" height="7" fill="#fff" stroke="currentColor" strokeWidth="1.500" />
      </Svg>
    </button>
    <button type="button" aria-label="Skin" className="flex w-[22px] justify-center">
      <Svg size={16}>
        <path d="M6 2c2 2 6 2 8 0l5 3-1 5h-3v9H5v-9H2L1 5z" fill="currentColor" />
      </Svg>
    </button>
    <button type="button" aria-label="Toolbox" className="flex w-[21px] justify-center">
      <Svg size={16}>
        <path d="M1 1h8v8H1zM1 11h8v8H1zM11 11h8v8h-8z" fill="currentColor" />
        <path d="M12 2h6v6h-6z" stroke="currentColor" strokeWidth="2" />
      </Svg>
    </button>
  </div>
);

const App = () => {
  return (
    <div className="relative flex h-screen flex-col overflow-hidden bg-[#cfcfe5] font-['Noto_Sans','Noto_Sans_CJK_SC',sans-serif] text-[12px] leading-[18px] text-black">
      <TitleBar />
      <MenuBar />
      <TopToolbar />
      <div className="flex min-h-0 flex-1">
        <Viewport />
        <SidePalette />
      </div>
      <BottomToolbar />
      <StatusBar />
      <CloudUpload />
      <ImeBar />
    </div>
  );
};

export default App;
